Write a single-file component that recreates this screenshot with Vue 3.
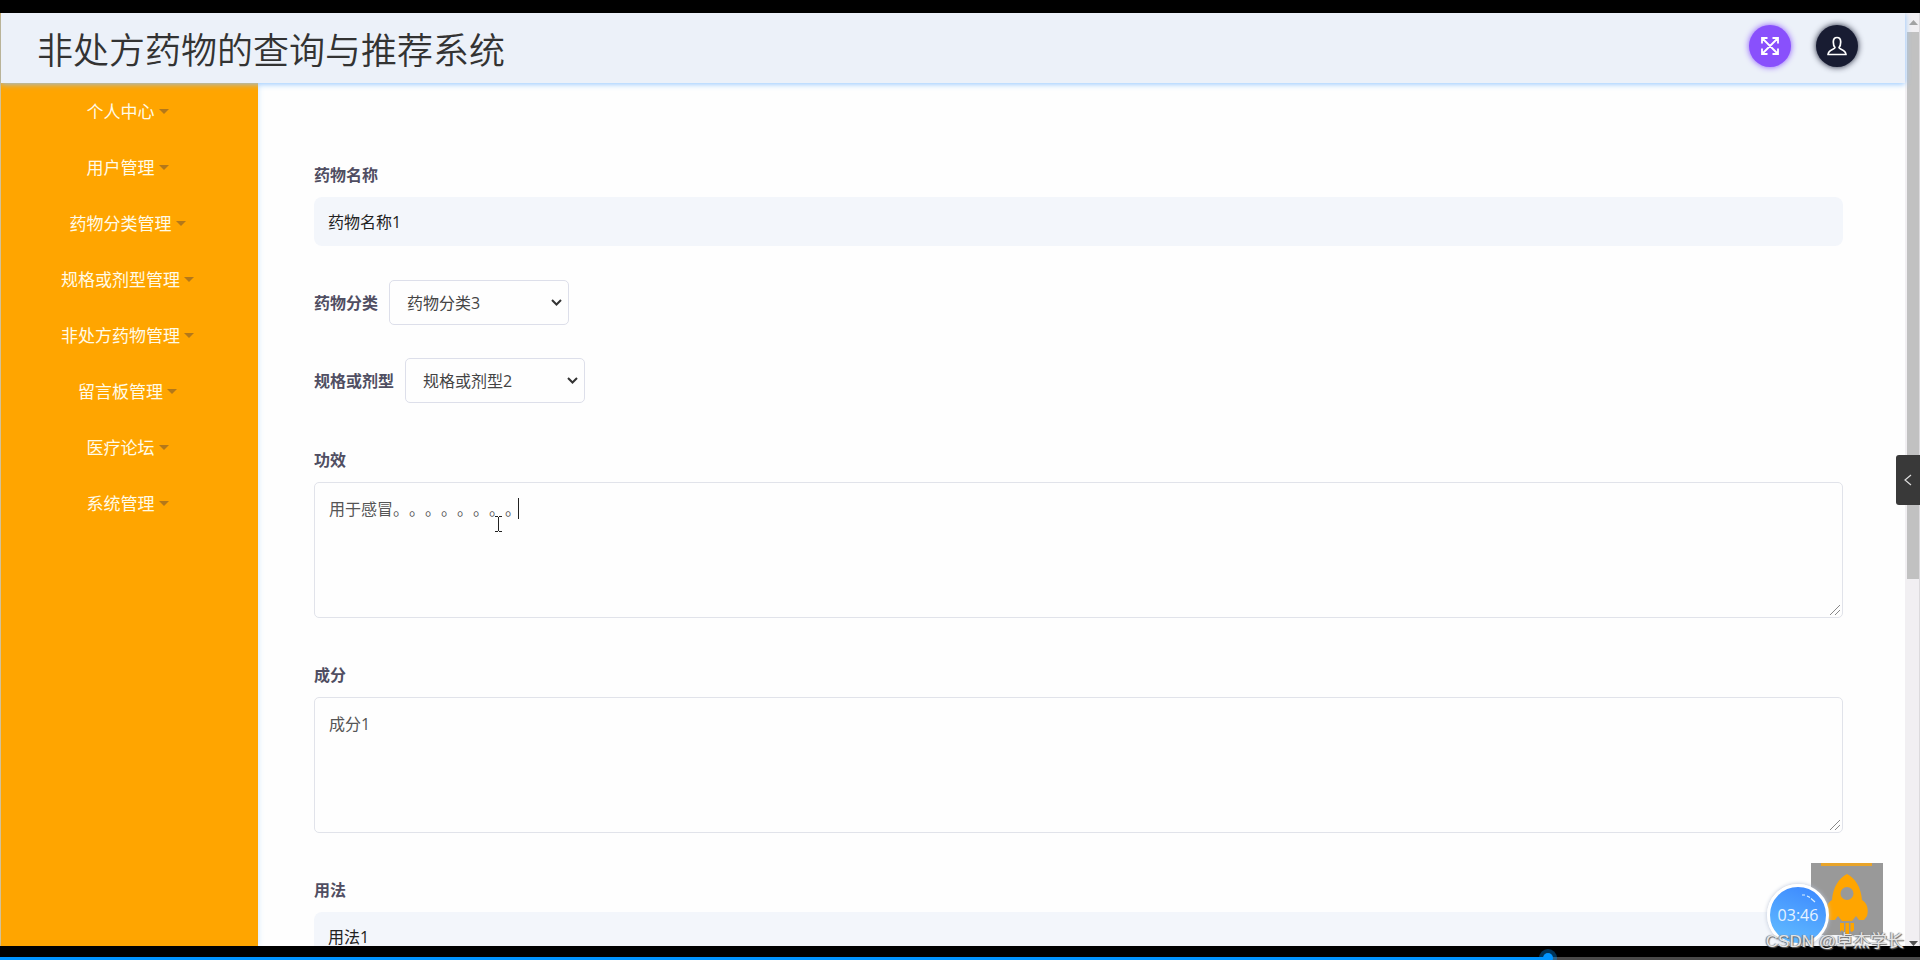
<script setup>
import { ref } from 'vue'

const menu = ['个人中心', '用户管理', '药物分类管理', '规格或剂型管理', '非处方药物管理', '留言板管理', '医疗论坛', '系统管理']
const name = ref('药物名称1')
const category = ref('药物分类3')
const spec = ref('规格或剂型2')
const effect = ref('用于感冒。。。。。。。。')
const component = ref('成分1')
const usage = ref('用法1')
const progress = ref(80.6)
</script>

<template>
  <div class="screen">
    <div class="viewport">
      <div class="app">
        <header class="topbar">
          <h1>非处方药物的查询与推荐系统</h1>
          <div class="actions">
            <button class="round purple" type="button" aria-label="全屏">
              <svg width="20" height="20" viewBox="0 0 20 20" fill="none" stroke="#fff" stroke-width="1.8">
                <path d="M3 3L17 17M17 3L3 17M2 7.500V2H7.500M12.500 2H18V7.500M18 12.500V18H12.500M7.500 18H2V12.500" />
              </svg>
            </button>
            <button class="round dark" type="button" aria-label="用户">
              <svg width="20" height="20" viewBox="0 0 20 20" fill="none" stroke="#fff" stroke-width="1.7" stroke-linejoin="round">
                <path d="M8 11.500C6.600 10 6.300 8 6.300 6C6.300 3 7.500 1.500 10 1.500S13.700 3 13.700 6C13.700 8 13.400 10 12 11.500C12 13.500 18.500 13 19 18.500H1C1.500 13 8 13.500 8 11.500Z" />
              </svg>
            </button>
          </div>
        </header>
        <div class="body">
          <nav class="sidebar">
            <a v-for="item in menu" :key="item" href="#">{{ item }}<i class="arrow"></i></a>
          </nav>
          <form class="form" @submit.prevent>
            <div class="field">
              <label for="name">药物名称</label>
              <input id="name" v-model="name" type="text" />
            </div>
            <div class="row">
              <label for="category">药物分类</label>
              <select id="category" v-model="category">
                <option>药物分类3</option>
              </select>
            </div>
            <div class="row last">
              <label for="spec">规格或剂型</label>
              <select id="spec" v-model="spec">
                <option>规格或剂型2</option>
              </select>
            </div>
            <div class="field area">
              <label for="effect">功效</label>
              <textarea id="effect" v-model="effect"></textarea>
              <span class="text-caret"></span>
              <svg class="pointer" width="9" height="18" viewBox="0 0 9 18" fill="none" stroke="#222">
                <path d="M1 1.500H4M5 1.500H8M4.500 2V16M1 16.500H4M5 16.500H8" />
              </svg>
            </div>
            <div class="field area">
              <label for="component">成分</label>
              <textarea id="component" v-model="component"></textarea>
            </div>
            <div class="field">
              <label for="usage">用法</label>
              <input id="usage" v-model="usage" type="text" />
            </div>
          </form>
        </div>
      </div>
      <div class="scrollbar">
        <svg width="11" height="19" viewBox="0 0 11 19"><path d="M1 12L5.500 7L10 12Z" fill="#a3a3a3" /></svg>
        <div class="thumb"></div>
        <svg width="11" height="6" viewBox="0 0 11 6"><path d="M1 1L5.500 6L10 1Z" fill="#505050" /></svg>
      </div>
      <button class="drawer" type="button" aria-label="展开">
        <svg width="8" height="12" viewBox="0 0 8 12" fill="none" stroke="#ddd" stroke-width="1.2"><path d="M7 1L1 6L7 11" /></svg>
      </button>
      <button class="rocket" type="button" aria-label="返回顶部">
        <svg width="72" height="72" viewBox="0 0 72 72">
          <path d="M10 0H61V3H10Z" fill="#e8a42a" />
          <path fill="#ffa500" fill-rule="evenodd" d="M36 11C28 15 22 24 21 37C16 40 14 46 16 53L19 57H24L27 53L31 58H41L45 53L48 57H53L56 53C58 46 56 40 51 37C50 24 44 15 36 11ZM36 24A6.500 6.500 0 1 1 36 37A6.500 6.500 0 1 1 36 24Z" />
          <path d="M29 60H33V69L31 67L29 69ZM34.500 60H38V72H34.500ZM39.500 60H43V67L41 69L39.500 68Z" fill="#ffa500" />
        </svg>
      </button>
      <div class="timer">
        03:46
        <svg class="glint" width="14" height="9" viewBox="0 0 14 9" fill="none" stroke="#d9efff" stroke-width="1.200"><path d="M0 1H3M5 2L8 3.500M9 4.500L13 8" /></svg>
      </div>
    </div>
    <div class="player">
      <div class="track"><div class="played" :style="{ width: progress + '%' }"></div></div>
      <span class="knob" :style="{ left: progress + '%' }"></span>
    </div>
    <span class="watermark">CSDN @卓杰学长</span>
  </div>
</template>

<style>
body {
  margin: 0;
  overflow: hidden;
}
</style>

<style scoped>
.screen,
.screen * {
  box-sizing: border-box;
}
.screen {
  position: relative;
  display: flex;
  flex-direction: column;
  height: 100vh;
  padding-top: 13px;
  overflow: hidden;
  background: #000;
  font-family: "Open Sans", "Noto Sans CJK SC", sans-serif;
  font-size: 16px;
}
button,
input,
select,
textarea {
  font: inherit;
}
.viewport {
  position: relative;
  display: flex;
  flex: 1;
  min-height: 0;
  overflow: hidden;
  background: #fefefe;
}
.app {
  display: flex;
  flex: 1;
  flex-direction: column;
  min-width: 0;
  border-left: 1px solid #d9a648;
}
.topbar {
  position: relative;
  z-index: 1;
  display: flex;
  flex: none;
  align-items: center;
  justify-content: space-between;
  height: 70px;
  padding: 0 47px 0 36px;
  background: #ecf1f9;
  box-shadow: 0 1px 6px #8fc4ff;
}
h1 {
  margin: 0;
  color: #333;
  font-family: "Noto Sans CJK SC", sans-serif;
  font-size: 36px;
  font-weight: 350;
  line-height: 70px;
}
.actions {
  display: flex;
  gap: 25px;
  padding-bottom: 4px;
}
.round {
  display: grid;
  place-items: center;
  width: 42px;
  height: 42px;
  padding: 0;
  border: 0;
  border-radius: 50%;
}
.purple {
  background: #8950fc;
  box-shadow: 0 0 6px #8950fc;
}
.dark {
  background: #181c32;
  box-shadow: 0 0 6px #181c32;
}
.body {
  display: flex;
  flex: 1;
  min-height: 0;
}
.sidebar {
  display: flex;
  flex: none;
  flex-direction: column;
  width: 257px;
  padding-top: 1px;
  background: #ffa500;
  box-shadow: 0 0 6px #cbe6ff;
}
.sidebar a {
  display: flex;
  align-items: center;
  justify-content: center;
  gap: 4px;
  height: 56px;
  padding-right: 4px;
  color: #fffbe8;
  font-size: 17px;
  line-height: 24px;
  text-decoration: none;
}
.arrow {
  margin-bottom: 2px;
  border: 5px solid transparent;
  border-top-color: #b3781a;
  border-bottom: 0;
}
.form {
  flex: 1;
  min-width: 0;
  height: 100%;
  padding: 80px 62px 0 56px;
}
label {
  color: #504e62;
  font-weight: 600;
  line-height: 24px;
}
.field {
  position: relative;
  display: flex;
  flex-direction: column;
  gap: 10px;
  margin-bottom: 34px;
}
.field input {
  width: 100%;
  height: 49px;
  padding: 0 14px 2px;
  border: 0;
  border-radius: 8px;
  outline: 0;
  background: #f3f6fb;
  color: #222;
}
.row {
  display: flex;
  align-items: center;
  gap: 11px;
  margin-bottom: 33px;
}
.area,
.row.last {
  margin-bottom: 45px;
}
select {
  width: 180px;
  height: 45px;
  padding: 0 17px;
  border: 1px solid #dddfea;
  border-radius: 5px;
  appearance: none;
  background: #fefefe url("data:image/svg+xml,%3Csvg xmlns='http://www.w3.org/2000/svg' width='11' height='7' fill='none' stroke='%23333' stroke-width='2'%3E%3Cpath d='M1 1L5.500 5.500L10 1'/%3E%3C/svg%3E") no-repeat right 6px center;
  color: #444;
}
textarea {
  display: block;
  width: 100%;
  height: 136px;
  padding: 14px;
  border: 1px solid #e1e3ea;
  border-radius: 5px;
  outline: 0;
  background: #fefefe;
  color: #555;
  line-height: 24px;
  resize: vertical;
  text-spacing-trim: space-all;
}
textarea::-webkit-resizer {
  background: url("data:image/svg+xml,%3Csvg xmlns='http://www.w3.org/2000/svg' width='15' height='15' fill='none' stroke='%23888'%3E%3Cpath d='M3 13L13 3M8 13L13 8'/%3E%3C/svg%3E") no-repeat right bottom;
}
.text-caret {
  position: absolute;
  top: 50px;
  left: 204px;
  width: 1px;
  height: 21px;
  background: #222;
}
.pointer {
  position: absolute;
  top: 67px;
  left: 180px;
}
.scrollbar {
  display: flex;
  flex: none;
  flex-direction: column;
  align-items: center;
  width: 15px;
  padding-left: 2px;
  background: #f1eff2;
  border-right: 1px solid #dcdadd;
}
.scrollbar svg {
  flex: none;
}
.thumb {
  width: 100%;
  height: 547px;
  margin-bottom: auto;
  background: #c1c1c1;
}
.drawer {
  position: absolute;
  top: 442px;
  right: 0;
  display: grid;
  place-items: center;
  width: 24px;
  height: 50px;
  padding: 0;
  border: 0;
  border-radius: 3px 0 0 3px;
  background: #393939;
}
.rocket {
  position: absolute;
  right: 37px;
  bottom: 11px;
  width: 72px;
  height: 72px;
  padding: 0;
  border: 0;
  background: #999;
}
.rocket svg {
  display: block;
}
.timer {
  position: absolute;
  right: 91px;
  bottom: 0;
  display: grid;
  place-items: center;
  width: 62px;
  height: 62px;
  border: 3px solid #fff;
  border-radius: 50%;
  background: linear-gradient(20deg, #65c0ff, #3a86ff);
  box-shadow: 0 0 4px #bbc4d6;
  color: #e6f3ff;
}
.glint {
  position: absolute;
  top: 7px;
  right: 10px;
}
.player {
  position: relative;
  display: flex;
  flex: none;
  flex-direction: column;
  justify-content: flex-end;
  height: 14px;
  background: #000;
}
.track {
  height: 3px;
  background: #4a4a4a;
}
.played {
  height: 100%;
  background: #0094ff;
}
.knob {
  position: absolute;
  top: 7px;
  width: 10px;
  height: 10px;
  margin-left: -5px;
  border-radius: 50%;
  background: #0094ff;
  box-shadow: 0 0 0 4px rgba(0, 148, 255, 0.35);
}
.watermark {
  position: absolute;
  right: 16px;
  bottom: 6px;
  color: #e4e4e4;
  font-family: "Liberation Sans", "Noto Sans CJK SC", sans-serif;
  font-size: 17px;
  line-height: 24px;
  text-shadow: 1px 1px 1px #666, -1px 0 1px #777;
}
</style>
